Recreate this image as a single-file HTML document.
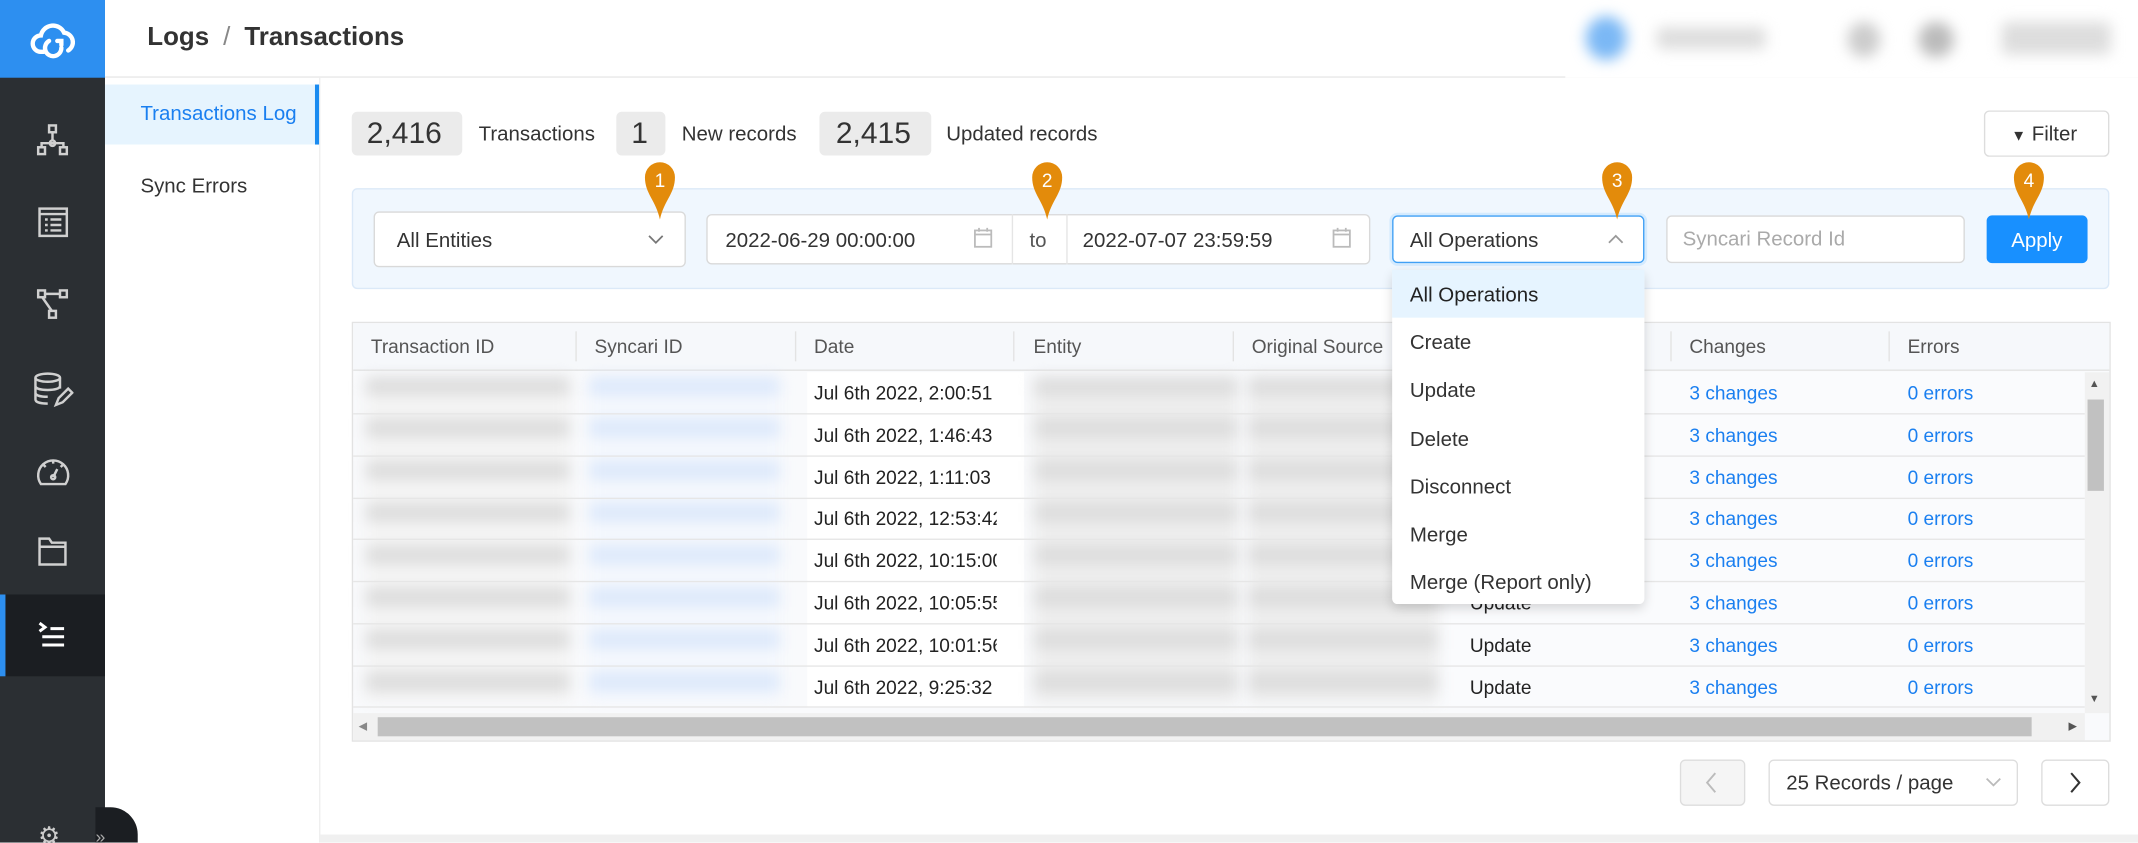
<!DOCTYPE html>
<html style="width:2138px;height:843px;overflow:hidden"><head><meta charset="utf-8"><style>
*{box-sizing:border-box;margin:0;padding:0}
body{width:2138px;height:843px;overflow:hidden;background:#fff;font-family:"Liberation Sans",sans-serif;position:relative}
#w{width:1568px;height:618px;position:absolute;left:0;top:0;overflow:hidden;transform:scale(1.36352);transform-origin:0 0;}
.a{position:absolute}
.t{position:absolute;white-space:nowrap;font-size:14px;color:#333;line-height:1}
.blue{color:#1a7ff0}
.pin{position:absolute;width:24px;height:44px}
.bl{position:absolute;filter:blur(5px);border-radius:4px}
.row{position:absolute;left:259px;width:1270px;height:1px;background:#e6e6e6}
.hd{color:#555;font-size:14px}
</style></head><body><div id="w">
<!-- sidebar -->
<div class="a" style="left:0;top:0;width:77px;height:618px;background:#2b2f33"></div>
<div class="a" style="left:0;top:0;width:77px;height:57px;background:#2d8ff0"></div>
<svg class="a" style="left:22px;top:14px" width="36" height="30" viewBox="0 0 36 30" fill="none" stroke="#fff" stroke-width="3.2" stroke-linecap="round"><path d="M10 24H8a6 6 0 0 1 0-12 9 9 0 0 1 17-2 7 7 0 0 1 3 13"/><path d="M14 16a6 6 0 1 0 9 5"/><path d="M20 16l3 0 0 3"/></svg>
<div class="a" style="left:0;top:436px;width:77px;height:60px;background:#1b1e22"></div>
<div class="a" style="left:0;top:436px;width:4px;height:60px;background:#2d8ff0"></div>
<svg class="a" style="left:26px;top:90px" width="26" height="26" viewBox="0 0 26 26" fill="none" stroke="#d0d0d0" stroke-width="1.8"><rect x="10" y="2" width="5" height="5"/><rect x="2" y="18" width="5" height="5"/><rect x="18" y="18" width="5" height="5"/><path d="M12.5 7v6M4.5 18v-3h16v3"/><circle cx="12.5" cy="15" r="2"/></svg>
<svg class="a" style="left:27px;top:151px" width="24" height="24" viewBox="0 0 24 24" fill="none" stroke="#d0d0d0" stroke-width="1.8"><rect x="2" y="2" width="20" height="20"/><path d="M2 6h20M6 10h2M10 10h8M6 14h2M10 14h8M6 18h2M10 18h8"/></svg>
<svg class="a" style="left:26px;top:210px" width="26" height="26" viewBox="0 0 26 26" fill="none" stroke="#d0d0d0" stroke-width="1.8"><rect x="2" y="3" width="5" height="5"/><rect x="18" y="3" width="5" height="5"/><rect x="10" y="18" width="5" height="5"/><path d="M7 5.5h11M5 8l7 10"/></svg>
<svg class="a" style="left:24px;top:272px" width="30" height="28" viewBox="0 0 30 28" fill="none" stroke="#d0d0d0" stroke-width="1.8"><ellipse cx="11" cy="5" rx="9" ry="3"/><path d="M2 5v16c0 2 4 3 9 3M20 5v8M2 11c0 2 4 3 9 3s9-1 9-3M2 16c0 2 4 3 9 3"/><path d="M17 25l2-5 7-7 3 3-7 7z"/></svg>
<svg class="a" style="left:26px;top:333px" width="26" height="26" viewBox="0 0 26 26" fill="none" stroke="#d0d0d0" stroke-width="1.8"><path d="M4 22a11 11 0 1 1 18 0z"/><path d="M13 5v2M6 8l1.5 1.5M20 8l-1.5 1.5M13 17l3-6"/><circle cx="13" cy="17" r="1.5"/></svg>
<svg class="a" style="left:27px;top:392px" width="24" height="24" viewBox="0 0 24 24" fill="none" stroke="#d0d0d0" stroke-width="1.8"><path d="M2 3h7l2 3h10v16H2z"/><path d="M2 9h19"/></svg>
<svg class="a" style="left:27px;top:455px" width="24" height="22" viewBox="0 0 24 22" fill="none" stroke="#fff" stroke-width="2.2"><path d="M2 2l4 3-4 3M10 6h10M4 12h16M4 18h16"/></svg>
<div class="a" style="left:70px;top:592px;width:31px;height:26px;background:#1b1e22;border-radius:0 20px 0 0"></div>
<div class="t" style="left:28px;top:604px;color:#ccc;font-size:18px">⚙</div>
<div class="t" style="left:70px;top:607px;color:#aaa;font-size:13px">»</div>
<!-- header -->
<div class="a" style="left:77px;top:56px;width:1491px;height:1px;background:#e8e8e8"></div>
<div class="t" style="left:108px;top:18px;font-size:19px;color:#333;font-weight:bold">Logs <span style="font-weight:normal;color:#888;margin:0 5px">/</span> Transactions</div>
<div class="a" style="left:1148px;top:0;width:420px;height:57px;background:#fff"></div>
<div class="bl" style="left:1163px;top:12px;width:30px;height:32px;border-radius:50%;background:#7bb8f5"></div>
<div class="bl" style="left:1215px;top:20px;width:80px;height:16px;background:#ddd"></div>
<div class="bl" style="left:1355px;top:16px;width:24px;height:26px;border-radius:50%;background:#ccc"></div>
<div class="bl" style="left:1407px;top:16px;width:26px;height:26px;border-radius:50%;background:#bbb"></div>
<div class="bl" style="left:1468px;top:16px;width:80px;height:24px;background:#ddd"></div>
<!-- subnav -->
<div class="a" style="left:234px;top:57px;width:1px;height:561px;background:#eee"></div>
<div class="a" style="left:77px;top:62px;width:157px;height:44px;background:#e6f4fe;border-right:3px solid #1a8bf0"></div>
<div class="t blue" style="left:103px;top:76px;font-size:15px">Transactions Log</div>
<div class="t" style="left:103px;top:129px;font-size:15px">Sync Errors</div>
<div class="a" style="left:235px;top:612px;width:1333px;height:6px;background:#f0f0f0"></div>
<!-- stats -->
<div class="a" style="left:258px;top:82px;width:81px;height:32px;background:#ebebeb;border-radius:4px"></div>
<div class="t" style="left:269px;top:87px;font-size:22px">2,416</div>
<div class="t" style="left:351px;top:91px;font-size:15px">Transactions</div>
<div class="a" style="left:452px;top:82px;width:36px;height:32px;background:#ebebeb;border-radius:4px"></div>
<div class="t" style="left:463px;top:87px;font-size:22px">1</div>
<div class="t" style="left:500px;top:91px;font-size:15px">New records</div>
<div class="a" style="left:601px;top:82px;width:82px;height:32px;background:#ebebeb;border-radius:4px"></div>
<div class="t" style="left:613px;top:87px;font-size:22px">2,415</div>
<div class="t" style="left:694px;top:91px;font-size:15px">Updated records</div>
<div class="a" style="left:1455px;top:81px;width:92px;height:34px;border:1px solid #ddd;border-radius:4px"></div>
<div class="t" style="left:1475px;top:91px;font-size:15px"><span style="font-size:11px">▼</span> Filter</div>
<!-- filter panel -->
<div class="a" style="left:258px;top:138px;width:1289px;height:74px;background:#f0f7fe;border:1px solid #dbe9f8;border-radius:4px"></div>
<div class="a" style="left:274px;top:155px;width:229px;height:41px;background:#fff;border:1px solid #d9d9d9;border-radius:4px"></div>
<div class="t" style="left:291px;top:169px;font-size:15px">All Entities</div>
<svg class="a" style="left:475px;top:172px" width="12" height="8"><path d="M1 1l5 5 5-5" stroke="#777" fill="none" stroke-width="1.3"/></svg>
<div class="a" style="left:518px;top:157px;width:487px;height:37px;background:#fff;border:1px solid #d9d9d9;border-radius:4px"></div>
<div class="a" style="left:742px;top:157px;width:1px;height:37px;background:#e5e5e5"></div>
<div class="a" style="left:782px;top:157px;width:1px;height:37px;background:#e5e5e5"></div>
<div class="t" style="left:532px;top:169px;font-size:15px">2022-06-29 00:00:00</div>
<div class="t" style="left:755px;top:169px;font-size:15px;color:#555">to</div>
<div class="t" style="left:794px;top:169px;font-size:15px">2022-07-07 23:59:59</div>
<svg class="a" style="left:714px;top:167px" width="14" height="15" fill="none" stroke="#bbb" stroke-width="1.3"><rect x="1" y="2" width="12" height="12"/><path d="M1 5h12M4 0v3M10 0v3"/></svg>
<svg class="a" style="left:977px;top:167px" width="14" height="15" fill="none" stroke="#bbb" stroke-width="1.3"><rect x="1" y="2" width="12" height="12"/><path d="M1 5h12M4 0v3M10 0v3"/></svg>
<div class="a" style="left:1021px;top:158px;width:185px;height:35px;background:#fff;border:1px solid #40a0f5;border-radius:4px;box-shadow:0 0 0 2px rgba(24,144,255,.12)"></div>
<div class="t" style="left:1034px;top:169px;font-size:15px">All Operations</div>
<svg class="a" style="left:1179px;top:171px" width="12" height="8"><path d="M1 7l5-5 5 5" stroke="#999" fill="none" stroke-width="1.3"/></svg>
<div class="a" style="left:1222px;top:158px;width:219px;height:35px;background:#fff;border:1px solid #d9d9d9;border-radius:4px"></div>
<div class="t" style="left:1234px;top:168px;font-size:15px;color:#aaa">Syncari Record Id</div>
<div class="a" style="left:1457px;top:158px;width:74px;height:35px;background:#1890ff;border-radius:4px"></div>
<div class="t" style="left:1475px;top:169px;font-size:15px;color:#fff">Apply</div>
<!-- table -->
<div class="a" style="left:258px;top:236px;width:1290px;height:308px;border:1px solid #e3e3e3;background:#f9fafc"></div>
<div class="a" style="left:259px;top:237px;width:1288px;height:35px;background:#f6f8fb;border-bottom:1px solid #e3e3e3"></div>
<div class="a" style="left:422px;top:243px;width:1px;height:22px;background:#e3e3e3"></div>
<div class="a" style="left:583px;top:243px;width:1px;height:22px;background:#e3e3e3"></div>
<div class="a" style="left:743px;top:243px;width:1px;height:22px;background:#e3e3e3"></div>
<div class="a" style="left:904px;top:243px;width:1px;height:22px;background:#e3e3e3"></div>
<div class="a" style="left:1225px;top:243px;width:1px;height:22px;background:#e3e3e3"></div>
<div class="a" style="left:1385px;top:243px;width:1px;height:22px;background:#e3e3e3"></div>
<div class="t hd" style="left:272px;top:247px">Transaction ID</div>
<div class="t hd" style="left:436px;top:247px">Syncari ID</div>
<div class="t hd" style="left:597px;top:247px">Date</div>
<div class="t hd" style="left:758px;top:247px">Entity</div>
<div class="t hd" style="left:918px;top:247px">Original Source</div>
<div class="t hd" style="left:1239px;top:247px">Changes</div>
<div class="t hd" style="left:1399px;top:247px">Errors</div>
<div class="a" style="left:592px;top:273px;width:159px;height:246px;background:#fff"></div>
<div class="a" style="left:1051px;top:273px;width:478px;height:246px;background:#fafbfd"></div>
<div class="bl" style="left:268px;top:276px;width:150px;height:240px;background:repeating-linear-gradient(#ddd 0 14px,#f5f5f5 14px 31px)"></div>
<div class="bl" style="left:432px;top:276px;width:140px;height:240px;background:repeating-linear-gradient(#dde9fb 0 14px,#f5f8fd 14px 31px)"></div>
<div class="bl" style="left:758px;top:276px;width:150px;height:240px;background:repeating-linear-gradient(#ddd 0 14px,#eee 14px 31px)"></div>
<div class="bl" style="left:915px;top:276px;width:140px;height:240px;background:repeating-linear-gradient(#ddd 0 14px,#eee 14px 31px)"></div>
<div class="row" style="top:303px"></div><div class="row" style="top:334px"></div><div class="row" style="top:365px"></div><div class="row" style="top:395px"></div><div class="row" style="top:426px"></div><div class="row" style="top:457px"></div><div class="row" style="top:488px"></div><div class="row" style="top:518px"></div>
<div class="a" style="left:597px;top:273px;width:134px;height:246px;overflow:hidden;font-size:14px;color:#222;line-height:30.8px;white-space:nowrap">Jul 6th 2022, 2:00:51<br>Jul 6th 2022, 1:46:43<br>Jul 6th 2022, 1:11:03<br>Jul 6th 2022, 12:53:42<br>Jul 6th 2022, 10:15:00<br>Jul 6th 2022, 10:05:55<br>Jul 6th 2022, 10:01:56<br>Jul 6th 2022, 9:25:32</div>
<div class="a blue" style="left:1239px;top:273px;font-size:14px;line-height:30.8px">3 changes<br>3 changes<br>3 changes<br>3 changes<br>3 changes<br>3 changes<br>3 changes<br>3 changes</div>
<div class="a blue" style="left:1399px;top:273px;font-size:14px;line-height:30.8px">0 errors<br>0 errors<br>0 errors<br>0 errors<br>0 errors<br>0 errors<br>0 errors<br>0 errors</div>
<div class="a" style="left:1078px;top:273px;font-size:14px;line-height:30.8px;color:#222">Update<br>Update<br>Update<br>Update<br>Update<br>Update<br>Update<br>Update</div>
<div class="a" style="left:1529px;top:273px;width:18px;height:250px;background:#f1f1f1"></div>
<div class="a" style="left:1531px;top:293px;width:12px;height:67px;background:#c1c1c1"></div>
<div class="t" style="left:1532px;top:278px;font-size:8px;color:#555">▲</div>
<div class="t" style="left:1532px;top:509px;font-size:8px;color:#555">▼</div>
<div class="a" style="left:259px;top:523px;width:1270px;height:20px;background:#f1f1f1"></div>
<div class="a" style="left:277px;top:526px;width:1213px;height:14px;background:#c1c1c1"></div>
<div class="t" style="left:263px;top:529px;font-size:8px;color:#888">◀</div>
<div class="t" style="left:1517px;top:529px;font-size:8px;color:#555">▶</div>
<!-- dropdown -->
<div class="a" style="left:1021px;top:198px;width:185px;height:245px;background:#fff;border-radius:4px;box-shadow:0 3px 8px rgba(0,0,0,.15)"></div>
<div class="a" style="left:1021px;top:198px;width:185px;height:35px;background:#e6f4ff"></div>
<div class="t" style="left:1034px;top:209px;font-size:15px;color:#222">All Operations</div>
<div class="t" style="left:1034px;top:244px;font-size:15px">Create</div>
<div class="t" style="left:1034px;top:279px;font-size:15px">Update</div>
<div class="t" style="left:1034px;top:315px;font-size:15px">Delete</div>
<div class="t" style="left:1034px;top:350px;font-size:15px">Disconnect</div>
<div class="t" style="left:1034px;top:385px;font-size:15px">Merge</div>
<div class="t" style="left:1034px;top:420px;font-size:15px">Merge (Report only)</div>
<!-- pins -->
<svg class="pin" style="left:472px;top:117px" viewBox="0 0 24 44"><path d="M12 44C9 30 1 25 1 13a11 11 0 0 1 22 0c0 12-8 17-11 31z" fill="#e38b0b"/><text x="12" y="20" text-anchor="middle" font-family="Liberation Sans" font-size="14" fill="#fff">1</text></svg>
<svg class="pin" style="left:756px;top:117px" viewBox="0 0 24 44"><path d="M12 44C9 30 1 25 1 13a11 11 0 0 1 22 0c0 12-8 17-11 31z" fill="#e38b0b"/><text x="12" y="20" text-anchor="middle" font-family="Liberation Sans" font-size="14" fill="#fff">2</text></svg>
<svg class="pin" style="left:1174px;top:117px" viewBox="0 0 24 44"><path d="M12 44C9 30 1 25 1 13a11 11 0 0 1 22 0c0 12-8 17-11 31z" fill="#e38b0b"/><text x="12" y="20" text-anchor="middle" font-family="Liberation Sans" font-size="14" fill="#fff">3</text></svg>
<svg class="pin" style="left:1476px;top:117px" viewBox="0 0 24 44"><path d="M12 44C9 30 1 25 1 13a11 11 0 0 1 22 0c0 12-8 17-11 31z" fill="#e38b0b"/><text x="12" y="20" text-anchor="middle" font-family="Liberation Sans" font-size="14" fill="#fff">4</text></svg>
<!-- pagination -->
<div class="a" style="left:1232px;top:557px;width:48px;height:34px;background:#f5f5f5;border:1px solid #ddd;border-radius:4px"></div>
<svg class="a" style="left:1250px;top:566px" width="10" height="16"><path d="M8 1L2 8l6 7" stroke="#bbb" fill="none" stroke-width="1.4"/></svg>
<div class="a" style="left:1297px;top:557px;width:183px;height:34px;border:1px solid #ddd;border-radius:4px"></div>
<div class="t" style="left:1310px;top:567px;font-size:15px">25 Records / page</div>
<svg class="a" style="left:1456px;top:570px" width="12" height="8"><path d="M1 1l5 5 5-5" stroke="#bbb" fill="none" stroke-width="1.3"/></svg>
<div class="a" style="left:1497px;top:557px;width:50px;height:34px;border:1px solid #ddd;border-radius:4px"></div>
<svg class="a" style="left:1517px;top:566px" width="10" height="16"><path d="M2 1l6 7-6 7" stroke="#333" fill="none" stroke-width="1.5"/></svg>
</div></body></html>
